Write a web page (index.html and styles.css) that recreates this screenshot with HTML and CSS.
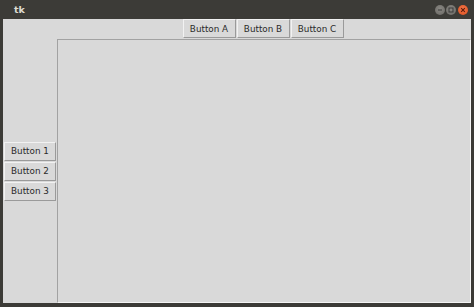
FILE: index.html
```html
<!DOCTYPE html>
<html>
<head>
<meta charset="utf-8">
<link rel="stylesheet" href="styles.css">
</head>
<body>
<div class="window">
  <div class="titlebar">
    <span class="title">tk</span>
    <div class="controls">
      <span class="ctl min"><svg width="10" height="10" viewBox="0 0 10 10"><line x1="3" y1="5" x2="7" y2="5" stroke="#3a3a3a" stroke-width="1"/></svg></span>
      <span class="ctl max"><svg width="10" height="10" viewBox="0 0 10 10"><rect x="3" y="3" width="4" height="4" fill="none" stroke="#3a3a3a" stroke-width="1"/></svg></span>
      <span class="ctl close"><svg width="10" height="10" viewBox="0 0 10 10"><path d="M3.2 3.2L6.8 6.8M6.8 3.2L3.2 6.8" stroke="#5a1a0a" stroke-width="1.1"/></svg></span>
    </div>
  </div>
  <div class="content">
    <div class="corner"></div>
    <div class="topbar">
      <button class="btn">Button A</button>
      <button class="btn">Button B</button>
      <button class="btn">Button C</button>
    </div>
    <div class="sidebar">
      <button class="btn side">Button 1</button>
      <button class="btn side">Button 2</button>
      <button class="btn side">Button 3</button>
    </div>
    <div class="canvas"></div>
  </div>
</div>
</body>
</html>
```
FILE: styles.css
```css
html, body {
  margin: 0;
  padding: 0;
  width: 474px;
  height: 307px;
  overflow: hidden;
  background: #3c3b37;
}
.window {
  display: flex;
  flex-direction: column;
  width: 474px;
  height: 307px;
}
.titlebar {
  height: 19px;
  display: flex;
  align-items: center;
  justify-content: space-between;
  background: #3c3b37;
  padding: 0 6px 0 14px;
  box-sizing: border-box;
}
.title {
  font-family: "DejaVu Sans", sans-serif;
  font-weight: bold;
  font-size: 9.5px;
  color: #dfdbd2;
  margin-top: -1px;
}
.controls {
  display: flex;
  gap: 1px;
  align-items: center;
}
.ctl {
  width: 10px;
  height: 10px;
  border-radius: 50%;
  display: flex;
}
.ctl.min, .ctl.max {
  background: radial-gradient(circle at 50% 40%, #8a8883, #6a6864);
}
.ctl.close {
  background: radial-gradient(circle at 50% 40%, #f2774a, #dc4d1d);
  margin-left: 1px;
}
.content {
  flex: 1;
  margin: 0 3px 4px 3px;
  background: #d9d9d9;
  display: grid;
  grid-template-columns: 54px 1fr;
  grid-template-rows: 20px 1fr;
}
.topbar {
  display: flex;
  justify-content: center;
  align-items: flex-start;
  gap: 1px;
  padding-right: 2px;
}
.sidebar {
  display: flex;
  flex-direction: column;
  justify-content: center;
  gap: 1px;
  padding-left: 1px;
  padding-right: 1px;
}
.btn {
  font-family: "DejaVu Sans", sans-serif;
  font-size: 8.8px;
  color: #2a2a2a;
  background: #d9d9d9;
  border: 1px solid;
  border-color: #f2f2f2 #9a9a9a #9a9a9a #f2f2f2;
  height: 19px;
  width: 53px;
  padding: 0;
  margin: 0;
  box-sizing: border-box;
}
.btn.side {
  width: 52px;
}
.canvas {
  background: #d9d9d9;
  border: 1px solid;
  border-color: #a2a2a2 #f4f4f4 #f4f4f4 #a2a2a2;
  box-sizing: border-box;
}
```
